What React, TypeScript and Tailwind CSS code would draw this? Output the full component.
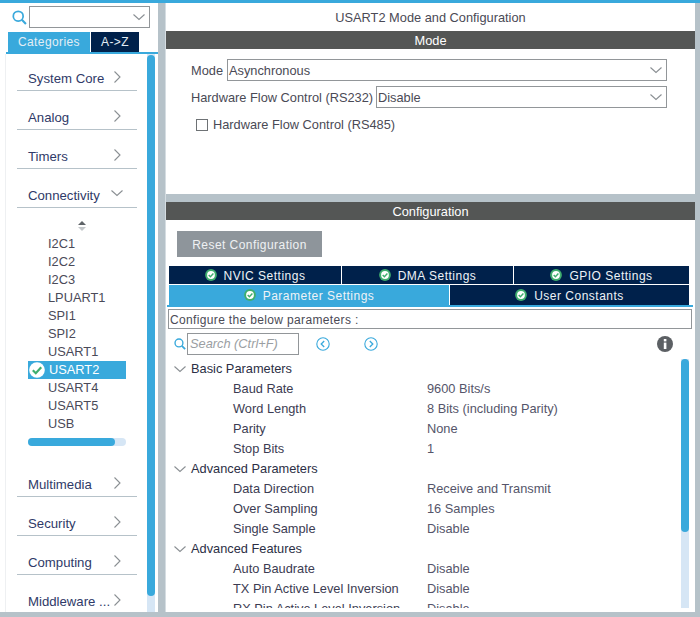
import type { ReactNode } from 'react';

const font = "font-['Liberation_Sans',Arial,sans-serif]";

function Chevron({ open = false }: { open?: boolean }) {
  return (
    <svg width="14" height="14" viewBox="0 0 14 14" fill="none" stroke="#8a8f93" strokeWidth="1.1">
      {open ? <path d="M1.5 4.5 L7 9.5 L12.5 4.5" /> : <path d="M4.5 1.5 L10 7 L4.5 12.5" />}
    </svg>
  );
}

function Check({ size = 12 }: { size?: number }) {
  return (
    <svg width={size} height={size} viewBox="0 0 12 12" className="shrink-0">
      <circle cx="6" cy="6" r="5.9" fill="#3fae6e" />
      <circle cx="6" cy="6" r="3.9" fill="#fff" />
      <path d="M3.7 6 L5.4 7.7 L8.4 4.6" fill="none" stroke="#3fae6e" strokeWidth="1.5" />
    </svg>
  );
}

function SearchIcon({ size }: { size: number }) {
  return (
    <svg width={size} height={size} viewBox="0 0 14 14" fill="none" stroke="#39a9dc" strokeWidth="1.6" className="shrink-0">
      <circle cx="5.8" cy="5.8" r="4.6" />
      <path d="M9.2 9.2 L13 13" strokeWidth="2" />
    </svg>
  );
}

function NavIcon({ dir }: { dir: 'left' | 'right' }) {
  return (
    <svg width="14" height="14" viewBox="0 0 14 14" fill="none" stroke="#39a9dc" strokeWidth="1.1">
      <circle cx="7" cy="7" r="6.2" />
      <path d={dir === 'left' ? 'M8.2 4 L5.2 7 L8.2 10' : 'M5.8 4 L8.8 7 L5.8 10'} strokeWidth="1.3" />
    </svg>
  );
}

function Category({ label, open }: { label: string; open?: boolean }) {
  return (
    <div className="ml-[11px] flex h-[39px] w-[120px] shrink-0 items-end justify-between border-b border-[#b6c2c9] pb-[3px] pl-[11px] pr-[13px] text-[13.2px] leading-[16px] text-[#2f3a68]">
      <span className="whitespace-nowrap">{label}</span>
      <span className={open ? 'mb-[4px]' : 'mb-[3px]'}>
        <Chevron open={open} />
      </span>
    </div>
  );
}

function Select({ value, className }: { value: string; className: string }) {
  return (
    <div className={`flex h-[22px] items-center justify-between border border-[#929699] pl-[1px] pr-[3px] ${className}`}>
      <span className="pt-[1px]">{value}</span>
      <Chevron open />
    </div>
  );
}

function BarTitle({ children }: { children: ReactNode }) {
  return <div className="flex h-[18px] items-center justify-center bg-[#545655] pt-[1px] text-[12.8px] text-white">{children}</div>;
}

function TabCell({ label, active, className }: { label: string; active?: boolean; className: string }) {
  return (
    <div
      className={`flex items-center justify-center gap-[7px] text-[12px] tracking-[0.5px] text-[#eef3f7] ${active ? 'bg-[#39a9dc]' : 'bg-[#00214b]'} ${className}`}
    >
      <Check />
      <span className="pt-[1px]">{label}</span>
    </div>
  );
}

const connectivity = ['I2C1', 'I2C2', 'I2C3', 'LPUART1', 'SPI1', 'SPI2', 'USART1', 'USART2', 'USART4', 'USART5', 'USB'];

const groups = [
  {
    title: 'Basic Parameters',
    rows: [
      ['Baud Rate', '9600 Bits/s'],
      ['Word Length', '8 Bits (including Parity)'],
      ['Parity', 'None'],
      ['Stop Bits', '1'],
    ],
  },
  {
    title: 'Advanced Parameters',
    rows: [
      ['Data Direction', 'Receive and Transmit'],
      ['Over Sampling', '16 Samples'],
      ['Single Sample', 'Disable'],
    ],
  },
  {
    title: 'Advanced Features',
    rows: [
      ['Auto Baudrate', 'Disable'],
      ['TX Pin Active Level Inversion', 'Disable'],
      ['RX Pin Active Level Inversion', 'Disable'],
    ],
  },
];

export default function App() {
  return (
    <div className={`${font} flex h-[617px] w-[700px] flex-col overflow-hidden bg-[#b6c2c9] text-[12.8px] text-[#4a4a55]`}>
      <div className="h-[3px] shrink-0 bg-[#39a9dc]" />
      <div className="flex min-h-0 flex-1">
        {/* Sidebar */}
        <aside className="flex h-[609px] w-[158px] shrink-0 flex-col bg-white">
          <div className="flex h-[29px] shrink-0 items-center gap-[2px] pl-[12px] pb-[3px] pt-[2px]">
            <SearchIcon size={15} />
            <div className="flex h-[22px] w-[121px] items-center justify-end border border-[#929699] pr-[3px]">
              <Chevron open />
            </div>
          </div>
          <div className="flex h-[20px] shrink-0 pl-[8px] text-[12px] tracking-[0.4px] text-[#e4eef5]">
            <div className="flex w-[82px] items-center justify-center bg-[#39a9dc]">Categories</div>
            <div className="ml-[1px] flex w-[48px] items-center justify-center bg-[#00214b]">A-&gt;Z</div>
          </div>
          <div className="ml-[6px] h-[2px] shrink-0 bg-[#39a9dc]" />
          <div className="ml-[5px] flex min-h-0 flex-1 border-l border-[#eef0f2]">
            <div className="min-w-0 flex-1 overflow-hidden">
              <div className="mt-[-2px] flex flex-col">
                <Category label="System Core" />
                <Category label="Analog" />
                <Category label="Timers" />
                <Category label="Connectivity" open />
              </div>
              <div className="flex h-[11px] w-[120px] flex-col items-center pt-[12px]">
                <svg width="10" height="12" viewBox="0 0 10 12" className="ml-[32px] shrink-0">
                  <path d="M5 1 L9 5 L1 5 Z" fill="#5f6468" />
                  <path d="M5 11 L9 7 L1 7 Z" fill="#c3c7ca" />
                </svg>
              </div>
              <div className="ml-[22px] mt-[15px] flex w-[98px] flex-col text-[#4a4a58]">
                {connectivity.map((name) =>
                  name === 'USART2' ? (
                    <div key={name} className="flex h-[18px] items-center gap-[4px] bg-[#39a9dc] pl-[1px] text-white">
                      <svg width="16" height="16" viewBox="0 0 16 16" className="shrink-0">
                        <circle cx="8" cy="8" r="7.8" fill="#fff" />
                        <path d="M3.8 8.2 L6.8 11.2 L12.2 5.2" fill="none" stroke="#3fae6e" strokeWidth="2.2" />
                      </svg>
                      <span>{name}</span>
                    </div>
                  ) : (
                    <div key={name} className="flex h-[18px] items-center pl-[20px]">
                      {name}
                    </div>
                  ),
                )}
                <div className="mt-[5px] h-[8px] w-full rounded-[4px] bg-[#d6e6f5]">
                  <div className="h-full w-[87px] rounded-[4px] bg-[#39a9dc]" />
                </div>
              </div>
              <div className="mt-[12px] flex flex-col">
                <Category label="Multimedia" />
                <Category label="Security" />
                <Category label="Computing" />
                <Category label="Middleware ..." />
              </div>
            </div>
            <div className="mr-[3px] w-[8px] shrink-0 bg-[#d6e6f5] pt-[1px]">
              <div className="h-[541px] rounded-[4px] bg-[#39a9dc]" />
            </div>
          </div>
        </aside>

        <main className="ml-[7px] flex h-[609px] w-[530px] shrink-0 flex-col gap-[8px] border-l border-[#d5dde2]">
          {/* Mode */}
          <section className="h-[191px] shrink-0 bg-white">
            <div className="flex h-[28px] items-center justify-center pt-[1px]">USART2 Mode and Configuration</div>
            <BarTitle>Mode</BarTitle>
            <div className="flex items-center pl-[25px] pt-[10px]">
              <span className="w-[36px] pt-[1px]">Mode</span>
              <Select value="Asynchronous" className="w-[440px]" />
            </div>
            <div className="mt-[5px] flex items-center pl-[25px]">
              <span className="w-[185px] whitespace-nowrap pt-[1px]">Hardware Flow Control (RS232)</span>
              <Select value="Disable" className="w-[291px]" />
            </div>
            <div className="mt-[7px] flex items-center gap-[5px] pl-[30px]">
              <div className="h-[12px] w-[12px] border border-[#6e7275]" />
              <span>Hardware Flow Control (RS485)</span>
            </div>
          </section>

          {/* Configuration */}
          <section className="flex min-h-0 flex-1 flex-col bg-white">
            <BarTitle>Configuration</BarTitle>
            <div className="ml-[11px] mt-[11px] flex h-[26px] w-[145px] shrink-0 items-center justify-center bg-[#8e959b] pt-[1px] text-[12px] tracking-[0.45px] text-[#eef1f3]">
              Reset Configuration
            </div>
            <div className="ml-[3px] mt-[9px] flex h-[18px] w-[520px] shrink-0 gap-[1px]">
              <TabCell label="NVIC Settings" className="w-[172px]" />
              <TabCell label="DMA Settings" className="w-[171px]" />
              <TabCell label="GPIO Settings" className="w-[175px]" />
            </div>
            <div className="ml-[3px] mt-[1px] flex h-[20px] w-[520px] shrink-0 gap-[1px]">
              <TabCell label="Parameter Settings" active className="w-[280px]" />
              <TabCell label="User Constants" className="w-[239px]" />
            </div>
            <div className="ml-[1px] h-[3px] w-[526px] shrink-0 border-b border-white bg-[#39a9dc]" />
            <div className="ml-[2px] mt-[1px] flex h-[20px] w-[524px] shrink-0 items-center border border-[#929699] pl-[1px] pt-[1px] text-[12px] tracking-[0.35px]">
              Configure the below parameters :
            </div>
            <div className="mt-[4px] flex h-[22px] shrink-0 items-center pl-[8px]">
              <SearchIcon size={12} />
              <div className="ml-[1px] flex h-[22px] w-[112px] items-center border border-[#929699] pl-[2px] italic text-[#9a9ea2]">
                Search (Ctrl+F)
              </div>
              <span className="ml-[17px]">
                <NavIcon dir="left" />
              </span>
              <span className="ml-[34px]">
                <NavIcon dir="right" />
              </span>
              <svg width="16" height="16" viewBox="0 0 16 16" className="ml-[279px]">
                <circle cx="8" cy="8" r="8" fill="#5c6064" />
                <rect x="6.8" y="6.6" width="2.6" height="6.4" fill="#fff" />
                <rect x="6.8" y="3" width="2.6" height="2.4" fill="#fff" />
              </svg>
            </div>
            <div className="flex min-h-0 flex-1 pb-[4px] pr-[6px]">
              <div className="mt-[4px] min-w-0 flex-1 overflow-hidden">
                {groups.map((group) => (
                  <div key={group.title}>
                    <div className="flex h-[20px] items-center text-[#2c2f45]">
                      <span className="ml-[7px] mr-[4px]">
                        <Chevron open />
                      </span>
                      {group.title}
                    </div>
                    {group.rows.map(([name, value]) => (
                      <div key={name} className="flex h-[20px] items-center text-[#3c3c52]">
                        <span className="ml-[67px] w-[194px] whitespace-nowrap">{name}</span>
                        <span className="text-[#55556a]">{value}</span>
                      </div>
                    ))}
                  </div>
                ))}
              </div>
              <div className="mt-[4px] w-[8px] shrink-0 bg-[#d6e6f5]">
                <div className="h-[173px] rounded-[4px] bg-[#39a9dc]" />
              </div>
            </div>
          </section>
        </main>
      </div>
    </div>
  );
}
